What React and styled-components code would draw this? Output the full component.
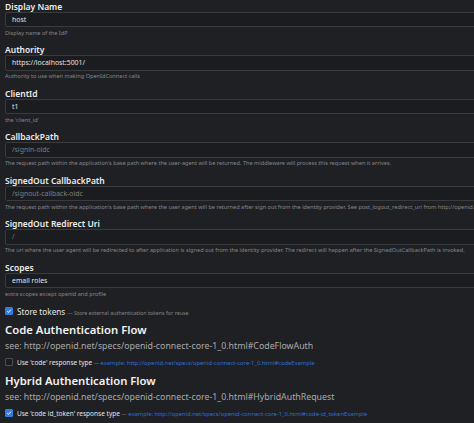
import React from 'react';
import styled, { createGlobalStyle } from 'styled-components';

const GlobalStyle = createGlobalStyle`
  html, body {
    margin: 0;
    padding: 0;
    background: #1f2023;
    overflow: hidden;
  }
  body {
    font-family: "Noto Sans", "Open Sans", sans-serif;
    color: #e6e6e6;
  }
`;

const Page = styled.div`
  width: 760px;
  padding: 0.5px 0 0 5px;
  white-space: nowrap;
`;

const Field = styled.div`
  margin-bottom: 6.5px;
`;

const Label = styled.label`
  display: block;
  height: 11px;
  line-height: 11px;
  font-size: 8.5px;
  font-weight: 600;
  color: #ececec;
`;

const TextInput = styled.input`
  display: block;
  box-sizing: border-box;
  width: 100%;
  height: 15.5px;
  margin: 0;
  padding: 0 6px;
  border: 1px solid #3a3b3e;
  border-radius: 2px;
  background: #1b1c1f;
  color: #e2e2e2;
  font-family: inherit;
  font-size: 6.9px;
  outline: none;

  &::placeholder {
    color: #7c7d80;
  }
`;

const Help = styled.div`
  margin-top: 1.5px;
  height: 9px;
  line-height: 9px;
  font-size: 5.6px;
  color: #85868a;
`;

const CheckRow = styled.label`
  display: flex;
  align-items: center;
  gap: 4px;
  height: 12px;
  font-size: ${(p) => p.$size || 6.5}px;
  color: #e4e4e4;
  margin-top: ${(p) => p.$top || 0}px;
`;

const Box = styled.span`
  width: 6px;
  height: 6px;
  flex-shrink: 0;
  border-radius: 1px;
  border: 1px solid ${(p) => (p.$checked ? '#2f7de1' : '#4d4e52')};
  background: ${(p) => (p.$checked ? '#2f7de1' : '#1b1c1f')};
  display: flex;
  align-items: center;
  justify-content: center;

  svg {
    width: 6px;
    height: 6px;
  }
`;

const Dash = styled.span`
  font-size: 5.3px;
  color: #85868a;
`;

const Link = styled.a`
  font-size: 5.8px;
  color: #2f6fd2;
  text-decoration: none;
`;

const Heading = styled.h2`
  margin: 4px 0 0;
  height: 18px;
  line-height: 18px;
  font-size: 11.3px;
  font-weight: 600;
  color: #f2f2f2;
`;

const See = styled.div`
  height: 14px;
  line-height: 14px;
  font-size: 8.8px;
  color: #a9aaad;
`;

const fields = [
  { label: 'Display Name', value: 'host', help: 'Display name of the IdP' },
  { label: 'Authority', value: 'https://localhost:5001/', help: 'Authority to use when making OpenIdConnect calls' },
  { label: 'ClientId', value: 't1', help: "the 'client_id'" },
  {
    label: 'CallbackPath',
    placeholder: '/signin-oidc',
    help: "The request path within the application's base path where the user-agent will be returned. The middleware will process this request when it arrives.",
  },
  {
    label: 'SignedOut CallbackPath',
    placeholder: '/signout-callback-oidc',
    help: "The request path within the application's base path where the user agent will be returned after sign out from the identity provider. See post_logout_redirect_uri from http://openid.net/specs/openid-connect-session-1_0.html#RedirectionAfterLogout",
  },
  {
    label: 'SignedOut Redirect Uri',
    placeholder: '/',
    help: 'The uri where the user agent will be redirected to after application is signed out from the identity provider. The redirect will happen after the SignedOutCallbackPath is invoked.',
  },
  { label: 'Scopes', value: 'email roles', help: 'extra scopes except openid and profile' },
];

const Check = ({ checked }) => (
  <Box $checked={checked}>
    {checked && (
      <svg viewBox="0 0 10 10">
        <path d="M2 5.2 L4.2 7.3 L8.2 2.8" fill="none" stroke="#fff" strokeWidth="1.6" />
      </svg>
    )}
  </Box>
);

export default function App() {
  return (
    <>
      <GlobalStyle />
      <Page>
        {fields.map((f) => (
          <Field key={f.label}>
            <Label>{f.label}</Label>
            <TextInput defaultValue={f.value} placeholder={f.placeholder} readOnly />
            <Help>{f.help}</Help>
          </Field>
        ))}

        <CheckRow $size={8.2}>
          <Check checked />
          <span>
            Store tokens <Dash>— Store external authentication tokens for reuse</Dash>
          </span>
        </CheckRow>

        <Heading>Code Authentication Flow</Heading>
        <See>see: http://openid.net/specs/openid-connect-core-1_0.html#CodeFlowAuth</See>
        <CheckRow $top={3}>
          <Check />
          <span>
            Use 'code' response type <Dash>— </Dash>
            <Link>example: http://openid.net/specs/openid-connect-core-1_0.html#codeExample</Link>
          </span>
        </CheckRow>

        <Heading>Hybrid Authentication Flow</Heading>
        <See>see: http://openid.net/specs/openid-connect-core-1_0.html#HybridAuthRequest</See>
        <CheckRow $top={3}>
          <Check checked />
          <span>
            Use 'code id_token' response type <Dash>— </Dash>
            <Link>example: http://openid.net/specs/openid-connect-core-1_0.html#code-id_tokenExample</Link>
          </span>
        </CheckRow>
      </Page>
    </>
  );
}
